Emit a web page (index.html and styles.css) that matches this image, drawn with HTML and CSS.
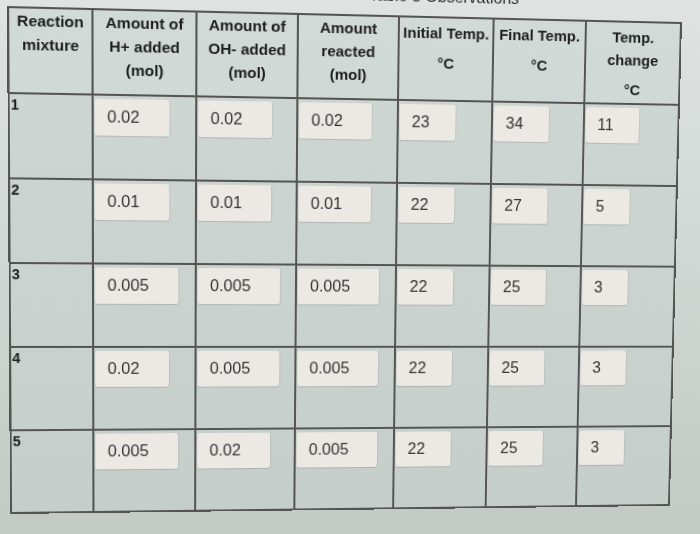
FILE: index.html
```html
<!DOCTYPE html>
<html lang="en">
<head>
<meta charset="utf-8">
<title>Observations</title>
<link rel="stylesheet" href="styles.css">
</head>
<body>
<div class="sheet">
  <div class="title">Table 3 Observations</div>
  <div class="grid">
    <div class="cell head"><span>Reaction</span><span>mixture</span></div>
    <div class="cell head"><span>Amount of</span><span>H+ added</span><span>(mol)</span></div>
    <div class="cell head"><span>Amount of</span><span>OH- added</span><span>(mol)</span></div>
    <div class="cell head"><span>Amount</span><span>reacted</span><span>(mol)</span></div>
    <div class="cell head temp"><span>Initial Temp.</span><span class="unit">°C</span></div>
    <div class="cell head temp"><span>Final Temp.</span><span class="unit">°C</span></div>
    <div class="cell head temp"><span>Temp.</span><span>change</span><span class="unit">°C</span></div>

    <div class="cell label">1</div>
    <div class="cell data"><span class="box">0.02</span></div>
    <div class="cell data"><span class="box">0.02</span></div>
    <div class="cell data"><span class="box">0.02</span></div>
    <div class="cell data"><span class="box box-t">23</span></div>
    <div class="cell data"><span class="box box-t">34</span></div>
    <div class="cell data"><span class="box box-t">11</span></div>

    <div class="cell label">2</div>
    <div class="cell data"><span class="box">0.01</span></div>
    <div class="cell data"><span class="box">0.01</span></div>
    <div class="cell data"><span class="box">0.01</span></div>
    <div class="cell data"><span class="box box-t">22</span></div>
    <div class="cell data"><span class="box box-t">27</span></div>
    <div class="cell data"><span class="box box-t">5</span></div>

    <div class="cell label">3</div>
    <div class="cell data"><span class="box">0.005</span></div>
    <div class="cell data"><span class="box">0.005</span></div>
    <div class="cell data"><span class="box">0.005</span></div>
    <div class="cell data"><span class="box box-t">22</span></div>
    <div class="cell data"><span class="box box-t">25</span></div>
    <div class="cell data"><span class="box box-t">3</span></div>

    <div class="cell label">4</div>
    <div class="cell data"><span class="box">0.02</span></div>
    <div class="cell data"><span class="box">0.005</span></div>
    <div class="cell data"><span class="box">0.005</span></div>
    <div class="cell data"><span class="box box-t">22</span></div>
    <div class="cell data"><span class="box box-t">25</span></div>
    <div class="cell data"><span class="box box-t">3</span></div>

    <div class="cell label">5</div>
    <div class="cell data"><span class="box">0.005</span></div>
    <div class="cell data"><span class="box">0.02</span></div>
    <div class="cell data"><span class="box">0.005</span></div>
    <div class="cell data"><span class="box box-t">22</span></div>
    <div class="cell data"><span class="box box-t">25</span></div>
    <div class="cell data"><span class="box box-t">3</span></div>
  </div>
</div>
</body>
</html>
```

FILE: styles.css
```css
html, body {
  margin: 0;
  padding: 0;
}

body {
  width: 700px;
  height: 534px;
  overflow: hidden;
  background: linear-gradient(to bottom, #dfe3e1 0%, #d2d9d6 40%, #c8cfcb 80%, #c3c9c5 100%);
  font-family: "Liberation Sans", Arial, sans-serif;
  color: #2b2b2b;
}

/* photographed sheet: the camera sees it in slight perspective */
.sheet {
  display: flex;
  flex-direction: column;
  width: 668px;
  transform-origin: 0 0;
  transform: matrix3d(1.061751, 0.025682, 0, 0.00007535,
                      0.0065, 1.040444, 0, 0.00004761,
                      0, 0, 1, 0,
                      7, 6, 0, 1);
}

.title {
  margin-top: -28px;
  margin-bottom: 10px;
  padding-left: 350px;
  height: 18px;
  font-size: 16px;
  line-height: 18px;
  color: #303030;
  white-space: nowrap;
}

.grid {
  display: grid;
  grid-template-columns: 80px 100px 99px 100px 95px 94px 98px;
  grid-template-rows: repeat(6, 83px);
  border-top: 2px solid #545454;
  border-left: 2px solid #545454;
  background: linear-gradient(to bottom, #cfd7d4 0%, #c9d2cf 60%, #c5cecb 100%);
}

.cell {
  box-sizing: border-box;
  border-right: 2px solid #545454;
  border-bottom: 2px solid #545454;
  min-width: 0;
}

.head {
  display: flex;
  flex-direction: column;
  align-items: center;
  padding-top: 0;
  font-size: 15px;
  font-weight: bold;
  line-height: 23px;
  color: #1d1d1d;
  white-space: nowrap;
  background: rgba(255, 255, 255, 0.08);
}

.head.temp {
  padding-top: 3px;
}

.head .unit {
  margin-top: 7px;
}

.label {
  padding: 1px 0 0 1px;
  font-size: 14px;
  font-weight: bold;
  line-height: 18px;
  color: #1d1d1d;
}

.data {
  padding: 3px 0 0 1px;
}

.box {
  display: inline-block;
  height: 36px;
  line-height: 36px;
  padding: 0 29px 0 12px;
  font-size: 16px;
  color: #333333;
  background: #ece8e4;
  border-radius: 2px;
  box-shadow: 0 1px 1px rgba(0, 0, 0, 0.13), 1px 0 1px rgba(0, 0, 0, 0.06);
}

.box-t {
  padding-right: 26px;
}
```
